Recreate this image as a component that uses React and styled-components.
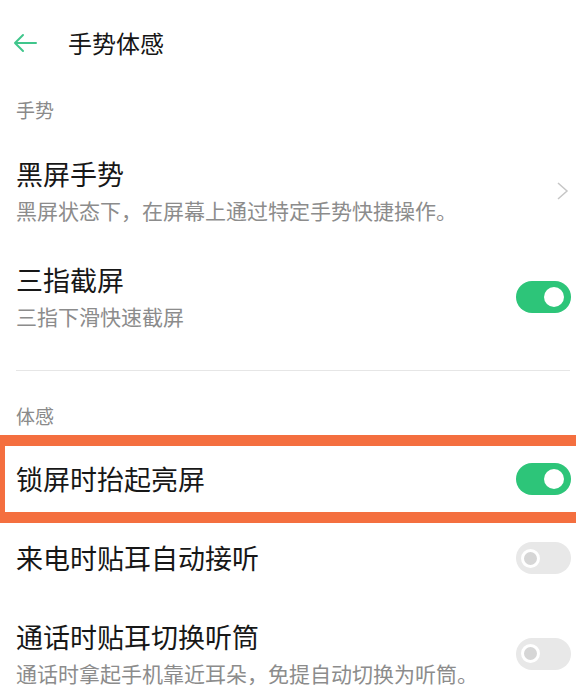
import React from 'react';
import styled, { createGlobalStyle } from 'styled-components';

const GlobalStyle = createGlobalStyle`
  html, body {
    margin: 0;
    padding: 0;
    background: #ffffff;
  }
  body {
    font-family: "Noto Sans CJK SC", "Noto Sans", sans-serif;
    color: #1b1b1b;
    overflow: hidden;
  }
`;

const Page = styled.div`
  width: 576px;
  height: 687px;
  display: flex;
  flex-direction: column;
  background: #fff;
`;

const Header = styled.div`
  height: 86px;
  display: flex;
  align-items: center;
  padding-left: 13px;
`;

const BackIcon = styled.svg`
  width: 24px;
  height: 20px;
  flex-shrink: 0;
`;

const Title = styled.div`
  margin-left: 31px;
  font-size: 24px;
  line-height: 32px;
  color: #161616;
`;

const SectionLabel = styled.div`
  margin-top: ${p => p.$gap}px;
  padding-left: 16px;
  font-size: 19px;
  line-height: 24px;
  color: #8a8a8a;
`;

const Row = styled.div`
  margin-top: ${p => p.$gap || 0}px;
  display: flex;
  align-items: center;
  justify-content: space-between;
  padding: 0 5px 0 16px;
`;

const Texts = styled.div`
  display: flex;
  flex-direction: column;
`;

const ItemTitle = styled.div`
  font-size: 27px;
  line-height: 34px;
  color: #171717;
`;

const ItemSub = styled.div`
  margin-top: 5px;
  font-size: 21px;
  line-height: 28px;
  color: #8c8c8c;
  white-space: nowrap;
`;

const Divider = styled.div`
  margin: ${p => p.$gap}px 6px 0 16px;
  height: 1px;
  background: #e6e6e6;
`;

const Highlight = styled.div`
  margin-top: ${p => p.$gap}px;
  border: 11px solid #f46f3f;
  border-left-width: 5px;
  border-right-width: 0;
  display: flex;
  align-items: center;
  justify-content: space-between;
  padding: 16px 5px 16px 11px;
`;

const Track = styled.div`
  width: 55px;
  height: 32px;
  border-radius: 16px;
  flex-shrink: 0;
  display: flex;
  align-items: center;
  box-sizing: border-box;
  justify-content: ${p => (p.$on ? 'flex-end' : 'flex-start')};
  padding: ${p => (p.$on ? '0 7px' : '0 5px')};
  background: ${p => (p.$on ? '#2dc579' : '#e8e8e8')};
`;

const Knob = styled.div`
  box-sizing: border-box;
  width: ${p => (p.$on ? 20 : 19)}px;
  height: ${p => (p.$on ? 20 : 19)}px;
  border-radius: 50%;
  background: ${p => (p.$on ? '#ffffff' : '#d6d6d6')};
  border: ${p => (p.$on ? 'none' : '3.5px solid #ffffff')};
`;

const Chevron = styled.svg`
  width: 13px;
  height: 20px;
  flex-shrink: 0;
  margin-right: 2px;
`;

const Toggle = ({ on }) => (
  <Track $on={on}>
    <Knob $on={on} />
  </Track>
);

const App = () => (
  <Page>
    <GlobalStyle />
    <Header>
      <BackIcon viewBox="0 0 24 20">
        <path
          d="M23 10H2M10 2L2 10L10 18"
          fill="none"
          stroke="#40c68c"
          strokeWidth="2"
          strokeLinecap="round"
          strokeLinejoin="round"
        />
      </BackIcon>
      <Title>手势体感</Title>
    </Header>

    <SectionLabel $gap={12}>手势</SectionLabel>

    <Row $gap={35}>
      <Texts>
        <ItemTitle>黑屏手势</ItemTitle>
        <ItemSub>黑屏状态下，在屏幕上通过特定手势快捷操作。</ItemSub>
      </Texts>
      <Chevron viewBox="0 0 13 20">
        <path d="M2 2L11 10L2 18" fill="none" stroke="#c6c6c6" strokeWidth="1.5" />
      </Chevron>
    </Row>

    <Row $gap={39}>
      <Texts>
        <ItemTitle>三指截屏</ItemTitle>
        <ItemSub>三指下滑快速截屏</ItemSub>
      </Texts>
      <Toggle on />
    </Row>

    <Divider $gap={40} />

    <SectionLabel $gap={33}>体感</SectionLabel>

    <Highlight $gap={7}>
      <ItemTitle>锁屏时抬起亮屏</ItemTitle>
      <Toggle on />
    </Highlight>

    <Row $gap={18}>
      <ItemTitle>来电时贴耳自动接听</ItemTitle>
      <Toggle />
    </Row>

    <Row $gap={45}>
      <Texts>
        <ItemTitle>通话时贴耳切换听筒</ItemTitle>
        <ItemSub>通话时拿起手机靠近耳朵，免提自动切换为听筒。</ItemSub>
      </Texts>
      <Toggle />
    </Row>
  </Page>
);

export default App;
